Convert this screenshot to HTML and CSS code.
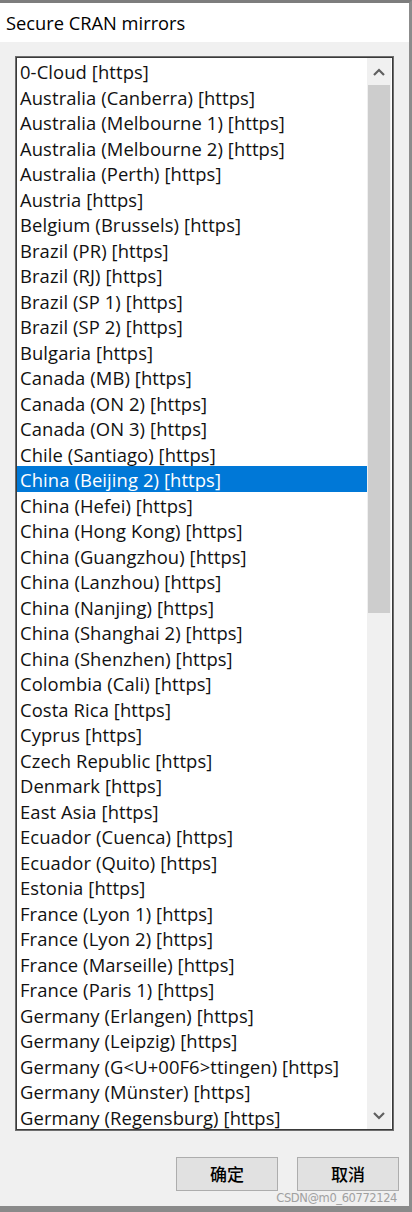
FILE: index.html
```html
<!DOCTYPE HTML>
<html lang="en">
  <head>
    <title>Secure CRAN mirrors</title>
    <meta charset="utf-8">
    <link rel="stylesheet" href="styles.css">
  </head>
  <body>

  <div id="dialog">
    <div id="titlebar">Secure CRAN mirrors</div>

    <div id="content">
      <div id="listbox">
        <div id="items">
          <div class="item">0-Cloud [https]</div>
          <div class="item">Australia (Canberra) [https]</div>
          <div class="item">Australia (Melbourne 1) [https]</div>
          <div class="item">Australia (Melbourne 2) [https]</div>
          <div class="item">Australia (Perth) [https]</div>
          <div class="item">Austria [https]</div>
          <div class="item">Belgium (Brussels) [https]</div>
          <div class="item">Brazil (PR) [https]</div>
          <div class="item">Brazil (RJ) [https]</div>
          <div class="item">Brazil (SP 1) [https]</div>
          <div class="item">Brazil (SP 2) [https]</div>
          <div class="item">Bulgaria [https]</div>
          <div class="item">Canada (MB) [https]</div>
          <div class="item">Canada (ON 2) [https]</div>
          <div class="item">Canada (ON 3) [https]</div>
          <div class="item">Chile (Santiago) [https]</div>
          <div class="item selected">China (Beijing 2) [https]</div>
          <div class="item">China (Hefei) [https]</div>
          <div class="item">China (Hong Kong) [https]</div>
          <div class="item">China (Guangzhou) [https]</div>
          <div class="item">China (Lanzhou) [https]</div>
          <div class="item">China (Nanjing) [https]</div>
          <div class="item">China (Shanghai 2) [https]</div>
          <div class="item">China (Shenzhen) [https]</div>
          <div class="item">Colombia (Cali) [https]</div>
          <div class="item">Costa Rica [https]</div>
          <div class="item">Cyprus [https]</div>
          <div class="item">Czech Republic [https]</div>
          <div class="item">Denmark [https]</div>
          <div class="item">East Asia [https]</div>
          <div class="item">Ecuador (Cuenca) [https]</div>
          <div class="item">Ecuador (Quito) [https]</div>
          <div class="item">Estonia [https]</div>
          <div class="item">France (Lyon 1) [https]</div>
          <div class="item">France (Lyon 2) [https]</div>
          <div class="item">France (Marseille) [https]</div>
          <div class="item">France (Paris 1) [https]</div>
          <div class="item">Germany (Erlangen) [https]</div>
          <div class="item">Germany (Leipzig) [https]</div>
          <div class="item">Germany (G&lt;U+00F6&gt;ttingen) [https]</div>
          <div class="item">Germany (Münster) [https]</div>
          <div class="item">Germany (Regensburg) [https]</div>
        </div>

        <div id="scrollbar">
          <div class="arrow">
            <svg width="12" height="8" viewBox="0 0 12 8"><path d="M1 7 L6 2 L11 7" fill="none" stroke="#606060" stroke-width="2.2"/></svg>
          </div>
          <div id="thumb"></div>
          <div id="track"></div>
          <div class="arrow">
            <svg width="12" height="8" viewBox="0 0 12 8"><path d="M1 1 L6 6 L11 1" fill="none" stroke="#606060" stroke-width="2.2"/></svg>
          </div>
        </div>
      </div>

      <div id="buttons">
        <span class="button">确定</span>
        <span class="button">取消</span>
      </div>
    </div>

    <span id="watermark">CSDN@m0_60772124</span>
  </div>

  </body>
</html>
```

FILE: styles.css
```css
      html {
        height: 100%;
      }
      body {
        margin: 0;
        padding: 0;
        background: #f0f0f0;
        color: #000000;
        font-family: "Open Sans", "Noto Sans CJK SC", sans-serif;
        height: 100%;
      }

      #dialog {
        position: relative;
        box-sizing: border-box;
        height: 1212px;
        border-top: 3px solid #7d7d7d;
        border-right: 3px solid #8c8c8c;
        border-bottom: 6px solid #8a8a8a;
        background: #f0f0f0;
        display: flex;
        flex-direction: column;
      }

      #titlebar {
        height: 39px;
        background: #ffffff;
        font-size: 18.3px;
        line-height: 39px;
        padding-left: 6px;
      }

      #content {
        padding: 14px 10px 0 15px;
      }

      #listbox {
        display: flex;
        width: 379px;
        box-sizing: border-box;
        border: 1px solid #6e6e6e;
        box-shadow: inset 0 0 0 1px #3a3a3a;
        background: #ffffff;
        padding: 1px;
      }

      #items {
        flex: 1;
      }

      .item {
        height: 25.5px;
        line-height: 27px;
        font-size: 18.4px;
        letter-spacing: 0.1px;
        padding-left: 3px;
        white-space: nowrap;
        color: #111;
      }

      .item.selected {
        background: #0078d7;
        color: #ffffff;
      }

      #scrollbar {
        width: 24px;
        display: flex;
        flex-direction: column;
        background: #f0f0f0;
        margin-right: 1px;
      }

      .arrow {
        height: 27px;
        display: flex;
        align-items: center;
        justify-content: center;
      }

      #thumb {
        height: 528px;
        margin: 0 1px;
        background: #cdcdcd;
      }

      #track {
        flex: 1;
      }

      #buttons {
        display: flex;
        justify-content: flex-end;
        gap: 19px;
        margin-top: 26px;
      }

      .button {
        width: 102px;
        height: 34px;
        box-sizing: border-box;
        border: 1px solid #adadad;
        background: #e1e1e1;
        font: 500 17px "Noto Sans CJK SC", sans-serif;
        line-height: 31px;
        text-align: center;
      }

      #watermark {
        position: absolute;
        right: 12px;
        bottom: 1px;
        font: 11.5px "DejaVu Sans", sans-serif;
        color: #a0a0a0;
        letter-spacing: -0.4px;
      }
```
